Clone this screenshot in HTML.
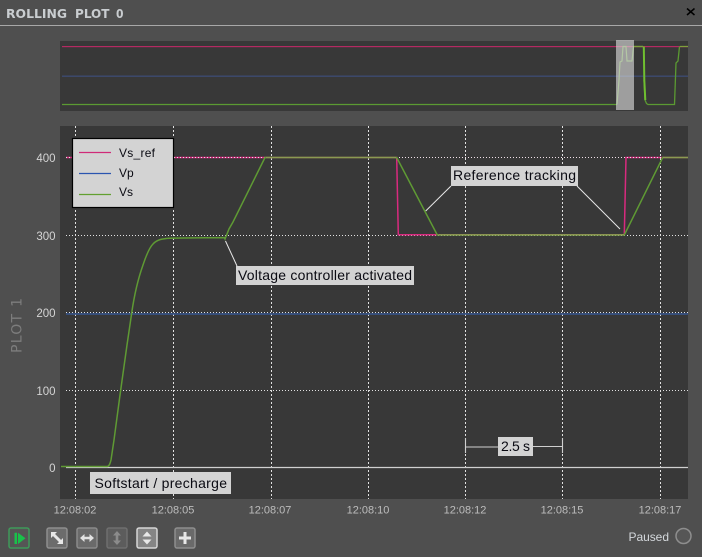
<!DOCTYPE html>
<html>
<head>
<meta charset="utf-8">
<style>
html,body{margin:0;padding:0;background:#4f4f4f;}
body{width:702px;height:557px;overflow:hidden;position:relative;}
svg{position:absolute;left:0;top:0;}
text{font-family:"Liberation Sans",sans-serif;}
.t{font-family:"DejaVu Sans",sans-serif;font-weight:bold;font-size:12px;fill:#c9cdd0;}
</style>
</head>
<body>
<svg width="702" height="557" viewBox="0 0 702 557" xmlns="http://www.w3.org/2000/svg">
<rect width="702" height="557" fill="#4f4f4f"/>
<text class="t" x="6" y="18" textLength="61" lengthAdjust="spacingAndGlyphs">ROLLING</text>
<text class="t" x="75" y="18" textLength="34.500" lengthAdjust="spacingAndGlyphs">PLOT</text>
<text class="t" x="116" y="18" textLength="7.500" lengthAdjust="spacingAndGlyphs">0</text>
<path d="M687 8.500l7.500 6.500M694.500 8.500l-7.500 6.500" stroke="#000" stroke-width="1.500" fill="none"/>
<rect x="0" y="25" width="702" height="1" fill="#a8a8a8"/>

<!-- mini plot -->
<rect x="60" y="41" width="628" height="70" fill="#383838"/>
<rect x="62" y="46" width="626" height="1.200" fill="#b42a62"/>
<rect x="62" y="75.500" width="626" height="1.400" fill="#3c4a70"/>
<path d="M62 104.500H617" stroke="#5b9a32" stroke-width="1.200" fill="none"/>
<path d="M617 104.500L619 80L620 62L622 61L623 46.500H626L627 61H632L633.500 46.500H643" stroke="#6fa347" stroke-width="1.200" fill="none"/>
<path d="M634 46.500H643M680 46.500H688" stroke="#7f9f3c" stroke-width="1.300" fill="none"/>
<path d="M644 80L645 100L646.500 103.500L648 104.500H674.500L676 63L678 61L679.500 46.500" stroke="#5b9a32" stroke-width="1.300" fill="none"/>
<path d="M643.800 46.500L644.300 80L645.300 100" stroke="#6fbf30" stroke-width="2" fill="none"/>
<rect x="616" y="40" width="18" height="70" fill="#dddddd" fill-opacity=".62"/>

<!-- main plot -->
<rect x="60" y="126" width="628" height="373" fill="#383838"/>
<g stroke="#e2e2e2" stroke-width="1" fill="none">
<path stroke-dasharray="2 2" d="M75.500 126V499M173.500 126V499M271.500 126V499M368.500 126V499M465.500 126V499M562.500 126V499M660.500 126V499"/>
<path stroke-dasharray="1 2" d="M66 235.500H688M66 390.500H688"/>
</g>
<path d="M66 314H688" stroke="#35558f" stroke-width="1.600" fill="none"/>
<path d="M66 312.500H688" stroke="#dfe3e8" stroke-width="1" stroke-dasharray="1 2" fill="none"/>
<path d="M66 467.500H688" stroke="#d0d0d0" stroke-width="1.200" fill="none"/>

<!-- reference -->
<path d="M66 157.500H396.700L398.300 234.700H624.300L626 157.500H688" stroke="#d92a7f" stroke-width="1.500" fill="none"/>
<path d="M66 157.500H688" stroke="#f0e0e8" stroke-width="1" stroke-dasharray="1 2" fill="none"/>
<!-- vs -->
<path d="M61 466.500H107C109 466.500 110 464 111 460L114 440L120 395L127 345L131.700 313C134 297 138 279 143 265C146 256 149 248 153 244C157 239.500 163 238.500 170 238.200C180 237.800 200 237.800 224.300 237.600L225 239L229 229L233 222L265 157.500H396.700L437.300 235H624.300L662.700 157.500H688" stroke="#5f9a34" stroke-width="1.500" fill="none"/>
<path d="M266 157.500H396M439 234.800H624M663 157.500H688" stroke="#8a9a52" stroke-width="1.300" fill="none"/>

<!-- annotation lines -->
<path d="M225.500 241L237 266" stroke="#e8e8e8" stroke-width="1" fill="none"/>
<path d="M451 186L425.700 211" stroke="#e8e8e8" stroke-width="1" fill="none"/>
<path d="M577 186L620 229" stroke="#e8e8e8" stroke-width="1" fill="none"/>
<path d="M465.500 438V453M562.500 438V453M466 447H498M532 446.500H562" stroke="#cfcfcf" stroke-width="1.100" fill="none"/>

<!-- annotations -->
<rect x="236" y="266" width="178" height="19" fill="#d3d3d3"/>
<text x="238" y="280" font-size="14" fill="#0a0a12" textLength="174">Voltage controller activated</text>
<rect x="451" y="166" width="127" height="20" fill="#d3d3d3"/>
<text x="453" y="180" font-size="14" fill="#0a0a12" textLength="123">Reference tracking</text>
<rect x="90" y="472" width="141" height="22" fill="#d3d3d3"/>
<text x="94.500" y="488" font-size="14" fill="#0a0a12" textLength="132.500">Softstart / precharge</text>
<rect x="498" y="437" width="35" height="19" fill="#d3d3d3"/>
<text x="501" y="451" font-size="14" fill="#0a0a12" textLength="29">2.5 s</text>

<!-- legend -->
<rect x="72.500" y="138.500" width="101" height="69" fill="#d3d3d3" stroke="#000" stroke-width="1.200"/>
<path d="M79 152.500H111" stroke="#d02a78" stroke-width="1.200"/>
<path d="M79 173.500H111" stroke="#2a55b0" stroke-width="1.200"/>
<path d="M79 194.500H111" stroke="#62a030" stroke-width="1.200"/>
<text x="119" y="157" font-size="12" fill="#0a0a12" textLength="36">Vs_ref</text>
<text x="119" y="177" font-size="12" fill="#0a0a12">Vp</text>
<text x="119" y="196" font-size="12" fill="#0a0a12">Vs</text>

<!-- y axis -->
<g font-size="11.500" fill="#d4d4d4" text-anchor="end">
<text x="55.500" y="162">400</text>
<text x="55.500" y="240">300</text>
<text x="55.500" y="317">200</text>
<text x="55.500" y="395">100</text>
<text x="55.500" y="472">0</text>
</g>
<text transform="translate(21.500 353) rotate(-90)" fill="#7d7d7d" style="font-family:'DejaVu Sans',sans-serif;font-size:14px;" textLength="55" lengthAdjust="spacing" xml:space="preserve">PLOT 1</text>

<!-- x axis -->
<g font-size="11" fill="#bdbdbd" text-anchor="middle">
<text x="75" y="513.500">12:08:02</text>
<text x="173" y="513.500">12:08:05</text>
<text x="270" y="513.500">12:08:07</text>
<text x="368" y="513.500">12:08:10</text>
<text x="465" y="513.500">12:08:12</text>
<text x="562" y="513.500">12:08:15</text>
<text x="660" y="513.500">12:08:17</text>
</g>

<!-- toolbar -->
<rect x="9" y="528" width="20" height="20" rx="2" fill="#555" stroke="#3f9a5a" stroke-width="1.500"/>
<path d="M14.500 532.700H17V544H14.500zM18 532.700L25.500 538.300L18 544z" fill="#19c24a"/>

<rect x="47" y="528" width="20" height="20" rx="2" fill="#6c6c6c" stroke="#8e8e8e" stroke-width="1.500"/>
<path d="M51 532H57L51 538zM63 544H57L63 538z" fill="#e8e8e8"/>
<path d="M53 534L61 542" stroke="#e8e8e8" stroke-width="3" fill="none"/>

<rect x="77" y="528" width="20" height="20" rx="2" fill="#6a6a6a" stroke="#8a8a8a" stroke-width="1.500"/>
<path d="M80 538L84.500 534V536.700H89.500V534L94 538L89.500 542V539.300H84.500V542z" fill="#e2e2e2"/>

<rect x="107" y="528" width="20" height="20" rx="2" fill="#5c5c5c" stroke="#6f6f6f" stroke-width="1.500"/>
<path d="M117 531L121 535.500H118.300V540.500H121L117 545L113 540.500H115.700V535.500H113z" fill="#8b8b8b"/>

<rect x="137" y="528" width="20" height="20" rx="2" fill="#858585" stroke="#d6d6d6" stroke-width="1.500"/>
<path d="M147 531.500L151.500 536.500H142.500zM142.500 539.500H151.500L147 544.500z" fill="#e8e8e8"/>

<rect x="175" y="528" width="20" height="20" rx="2" fill="#6a6a6a" stroke="#8e8e8e" stroke-width="1.500"/>
<path d="M183.500 532H186.500V536.500H191V539.500H186.500V544H183.500V539.500H179V536.500H183.500z" fill="#e8e8e8"/>

<!-- paused -->
<text x="628.500" y="541" font-size="12" fill="#d4d8dc" textLength="40.500">Paused</text>
<circle cx="683.500" cy="536" r="7.500" fill="#565656" stroke="#8e8e8e" stroke-width="1.500"/>
</svg>
</body>
</html>
